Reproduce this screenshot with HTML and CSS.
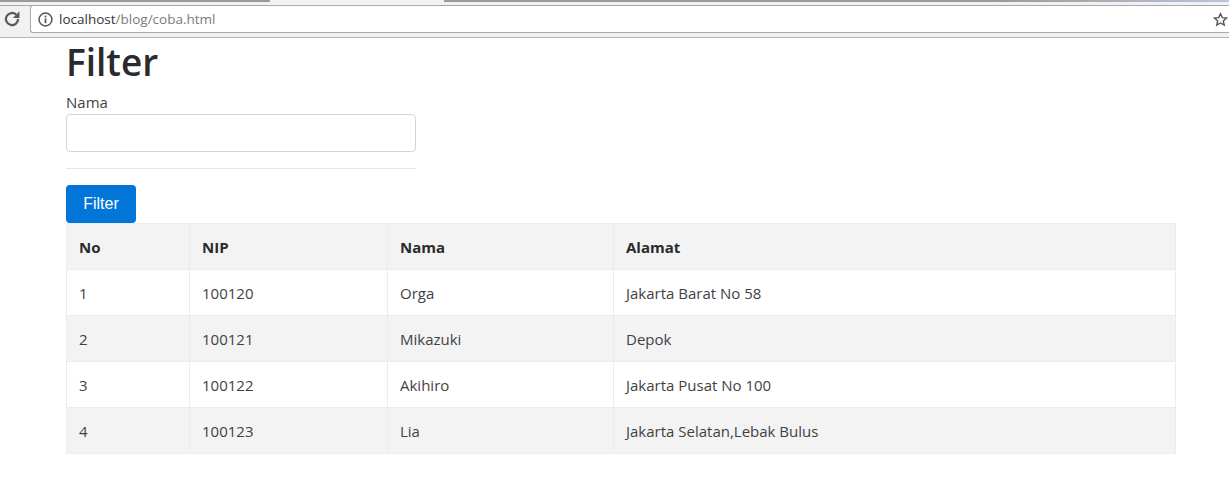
FILE: index.html
```html
<!DOCTYPE html>
<html lang="en">
<head>
<meta charset="utf-8">
<title>coba</title>
<link rel="stylesheet" href="styles.css">
</head>
<body>
<header class="chrome">
  <div class="tabs"><span class="tab tab-a"></span><span class="tab tab-b"></span></div>
  <div class="toolbar">
    <svg class="reload" viewBox="0 0 16 16" width="18" height="18"><path d="M13.4 8A5.4 5.4 0 1 1 11.8 4.2" fill="none" stroke="#5a5a5a" stroke-width="2"/><path d="M14.6 1.2V7H8.8Z" fill="#5a5a5a"/></svg>
    <div class="omnibox">
      <svg class="info" viewBox="0 0 14 14" width="15" height="15"><circle cx="7" cy="7" r="6" fill="none" stroke="#555" stroke-width="1.4"/><rect x="6.2" y="6" width="1.6" height="4.4" fill="#555"/><rect x="6.2" y="3.4" width="1.6" height="1.6" fill="#555"/></svg>
      <span class="url"><span class="host">localhost</span>/blog/coba.html</span>
      <svg class="star" viewBox="0 0 16 16" width="15" height="15"><path d="M8 1.8l1.9 4.2 4.5.5-3.4 3 1 4.5L8 11.7 4 14l1-4.5-3.4-3 4.5-.5Z" fill="none" stroke="#555" stroke-width="1.5"/></svg>
    </div>
  </div>
</header>
<main class="container">
  <h1 class="title">Filter</h1>
  <form class="filter">
    <label class="label" for="nama">Nama</label>
    <input class="input" id="nama" type="text">
    <hr class="rule">
    <button class="btn" type="button">Filter</button>
  </form>
  <table class="table">
    <colgroup><col class="c1"><col class="c2"><col class="c3"><col class="c4"></colgroup>
    <thead><tr><th>No</th><th>NIP</th><th>Nama</th><th>Alamat</th></tr></thead>
    <tbody>
      <tr><td>1</td><td>100120</td><td>Orga</td><td>Jakarta Barat No 58</td></tr>
      <tr><td>2</td><td>100121</td><td>Mikazuki</td><td>Depok</td></tr>
      <tr><td>3</td><td>100122</td><td>Akihiro</td><td>Jakarta Pusat No 100</td></tr>
      <tr><td>4</td><td>100123</td><td>Lia</td><td>Jakarta Selatan,Lebak Bulus</td></tr>
    </tbody>
  </table>
</main>
</body>
</html>
```
FILE: styles.css
```css
* { box-sizing: border-box; }
html, body { margin: 0; padding: 0; background: #fff; }
body { font-family: "Open Sans", "Noto Sans", sans-serif; font-size: 15px; color: #292b2c; height: 502px; overflow: hidden; }

.chrome { height: 38px; background: #f1f1f1; border-bottom: 1px solid #b4b4b4; }
.tabs { height: 6px; border-bottom: 1px solid #a9a9a9; display: flex; justify-content: space-between; }
.tab { display: block; height: 2px; }
.tab-a { width: 270px; background: #9a9a9a; }
.tab-b { width: 785px; background: linear-gradient(90deg, #9a9a9a 0 70%, #b9c6da); }
.toolbar { display: flex; align-items: flex-start; height: 31px; padding-left: 3px; }
.reload { flex: none; margin: 4px 9px 0 0; }
.omnibox { flex: 1; height: 28px; margin-top: -1px; background: #fff; border: 1px solid #a9a9a9; border-right: 0; border-radius: 3px 0 0 3px; display: flex; align-items: center; padding: 0 1px 0 7px; }
.info { flex: none; margin-right: 6px; }
.url { flex: 1; font-size: 13.5px; color: #7b7b7b; }
.host { color: #333; }

.container { padding: 0 53px 0 66px; }
.title { margin: 0; font-size: 37px; line-height: 47px; font-weight: 600; color: #292b2c; }
.filter { display: block; width: 350px; }
.label { display: block; height: 22px; line-height: 21px; font-size: 15px; color: #3f4244; margin-top: 7px; }
.input { display: block; width: 100%; height: 38px; border: 1px solid #d5d5d5; border-radius: 4px; background: #fff; }
.rule { height: 1px; margin: 16px 0; border: 0; background: #e6e6e6; }
.btn { display: block; width: 70px; height: 38px; border: 0; border-radius: 4px; background: #0275d8; color: #fff; font-family: "Liberation Sans", Arial, sans-serif; font-size: 16px; }

.table { width: 1110px; border-collapse: collapse; table-layout: fixed; }
.c1 { width: 123px; } .c2 { width: 198px; } .c3 { width: 226px; } .c4 { width: 562px; }
.table th, .table td { height: 46px; padding: 0 12px; border: 1px solid #ececec; text-align: left; font-size: 15px; vertical-align: middle; }
.table th { font-weight: 700; color: #292b2c; }
.table td { color: #3f4244; }
.table thead tr, .table tbody tr:nth-child(even) { background: #f3f3f3; }
```
